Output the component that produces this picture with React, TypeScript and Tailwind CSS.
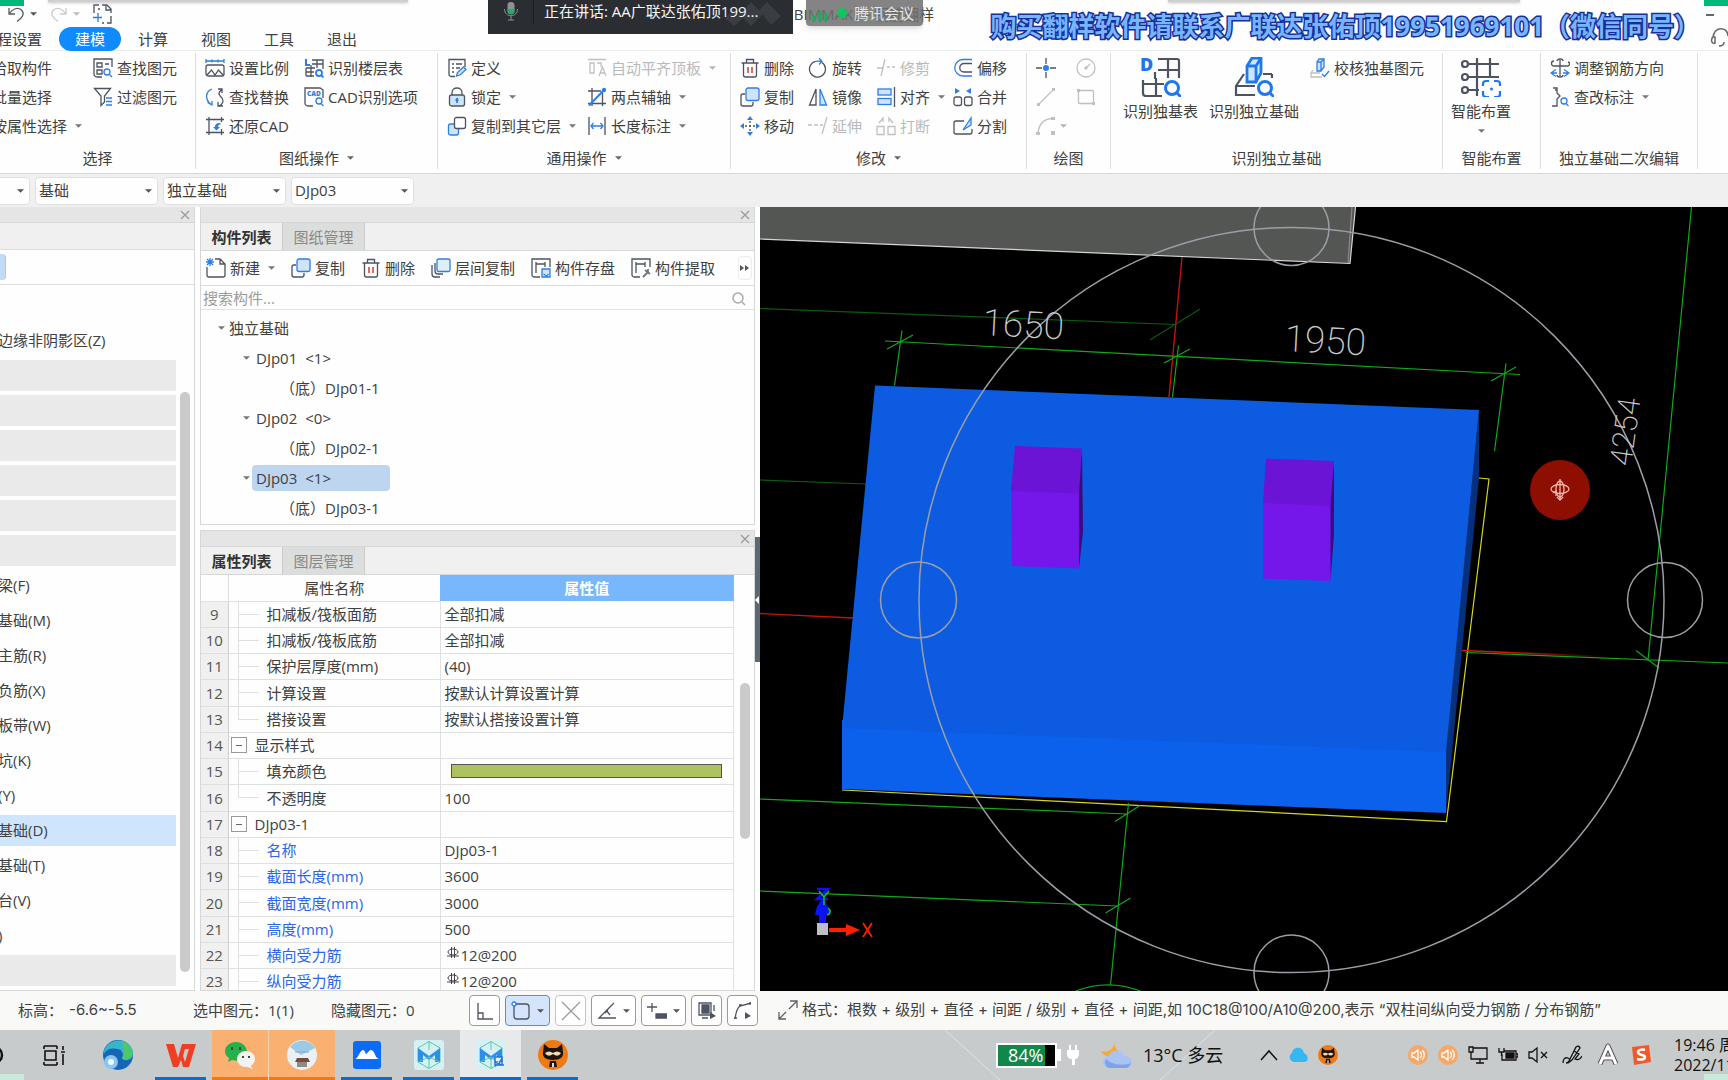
import type { ReactNode } from "react";
import clsx from "clsx";

const K = "#4d5361";
const B = "#2d7fe6";
const L = "#cfe4fb";
const G = "#bfc1c1";

const icons: Record<string, ReactNode> = {
  undo: <path d="M3 4v6h6M3.500 9.500C6 5 12 2.500 15.500 6s1 8-4.500 11.500" stroke="#5a5a5a" />,
  redo: <path d="M17 4v6h-6M16.500 9.500C14 5 8 2.500 4.500 6s-1 8 4.500 11.500" stroke="#c9cbca" />,
  newDoc: (
    <>
      <path d="M2 9V1h5M10 1h5l4 4v4M14 1v5h5M19 12v7h-4M12 19h-2M6 5h2" stroke={K} />
      <path d="M6 9v9M1 13.500h9" stroke={B} />
    </>
  ),
  find: (
    <>
      <path d="M9 19H4a3 3 0 0 1-3-3V1h18v8M4 5h5v4H4zM4 12h5v4H4zM12 6h4" stroke={K} />
      <circle cx="14" cy="14" r="3" stroke={B} />
      <path d="m16.500 16.500 2.500 2.500" stroke={B} />
    </>
  ),
  filter: (
    <>
      <path d="M1.500 1.500h16l-6 7.500v6L8 18.500V9z" stroke={K} />
      <path d="M13 11h6M13 14.500h6M13 18h6" stroke={B} />
    </>
  ),
  scale: (
    <>
      <path d="M1 3h18M1 1v4M19 1v4M7 1.500v3M13 1.500v3" stroke={B} />
      <rect x="1" y="7" width="18" height="11" rx="2" stroke={K} />
      <path d="m2 17 4.500-5 3.500 5 3.500-5 4.500 5" stroke={K} />
    </>
  ),
  floorTable: (
    <>
      <path d="M2 1v6h4" stroke={B} strokeWidth="2" />
      <path d="M8 2h11v9M8 6h11M13 2v8M2 10h9M2 14h8M2 18h8M2 10v8M7 7v12" stroke={K} />
      <circle cx="15" cy="15" r="3" stroke={B} strokeWidth="1.800" />
      <path d="m17.500 17.500 2 2" stroke={B} strokeWidth="1.800" />
    </>
  ),
  replace: (
    <>
      <path d="M7 2C2 4 1 8 2 12s3 5 5 6M2.500 15.500 7 18V14" stroke={B} />
      <path d="M13 2h4v4M17 2c-4 4-4 5 0 9 2 3 1 6-3 8M13 15v4h5" stroke={K} />
    </>
  ),
  cadOptions: (
    <>
      <path d="M9 19H4a3 3 0 0 1-3-3V1h15l3 2v8" stroke={K} />
      <text x="3" y="8.500" fontSize="6.500" fontWeight="800" fill={B} stroke="none">CAD</text>
      <circle cx="15" cy="14" r="3" stroke={B} />
      <path d="m17 16.500 2.500 2.500" stroke={B} />
    </>
  ),
  restore: (
    <>
      <path d="M4 1v18M1 16.500h18M1 3.500h18M16.500 1v5M16.500 13v6" stroke={K} />
      <path d="M15 7c-4 0-5 2-5 4H8l3.500 3.500L15 11h-2c0-2 1-2.500 3-2.500z" fill={B} stroke="none" />
    </>
  ),
  define: (
    <>
      <path d="M8 18.500H4a2 2 0 0 1-2-2v-15h16V9M5 6h2M9 6h6M5 10h2M9 10h4M5 14h2" stroke={K} />
      <path d="m9.500 18 1-3.500 6-5.500 2.500 2.500-6 5.500z" fill={L} stroke={B} />
    </>
  ),
  lock: (
    <>
      <path d="M5 8V5.500a5 4.500 0 0 1 10 0V8" stroke={K} />
      <rect x="2.500" y="8" width="15" height="11" rx="2" fill={L} stroke={K} />
      <path d="M10 11v5M8.500 13h3" stroke={B} strokeWidth="1.800" />
    </>
  ),
  copyFloor: (
    <>
      <rect x="1.500" y="8" width="10" height="11" rx="2" fill={L} stroke={B} />
      <rect x="7.500" y="1.500" width="11" height="11" rx="2" fill="#fff" stroke={K} />
    </>
  ),
  alignTop: (
    <>
      <path d="M1 1.500h18M3 5h4v10H3zM10 5h4v4M12 18l3.500-9L19 18M13.500 15h4" stroke={G} />
    </>
  ),
  axis: (
    <>
      <path d="M5 1v18M1 16.500h18M1 4h13M15.500 6v13" stroke={K} />
      <path d="M2 18.500 18 2" stroke={B} strokeWidth="2" />
      <circle cx="17" cy="3" r="1.500" fill={B} stroke={B} />
    </>
  ),
  length: (
    <>
      <path d="M2 1v18M18 1v18" stroke={K} />
      <path d="M4 10h12M6.500 7 4 10l2.500 3M13.500 7l2.500 3-2.500 3" stroke={B} />
    </>
  ),
  trash: (
    <>
      <path d="M1.500 5h17M3.500 5v12a2 2 0 0 0 2 2h9a2 2 0 0 0 2-2V5M6.500 4.500V1.500h7v3" stroke={K} />
      <path d="M8 9v6M12 9v6" stroke="#d8473c" strokeWidth="1.600" />
    </>
  ),
  copy: (
    <>
      <path d="M5 7H3a2 2 0 0 0-2 2v8a2 2 0 0 0 2 2h8a2 2 0 0 0 2-2v-2" stroke={K} />
      <rect x="6" y="1" width="13" height="12.500" rx="2" fill={L} stroke={B} />
    </>
  ),
  move: (
    <>
      <path d="M10 5v10M5 10h10" stroke={K} strokeDasharray="2 2" />
      <path d="M10 0 7 4h6zM10 20l-3-4h6zM0 10l4-3v6zM20 10l-4-3v6z" fill={B} stroke="none" />
    </>
  ),
  rotate: (
    <>
      <path d="M14 4.500a8 8 0 1 1-7-1" stroke={K} />
      <path d="M6 4c2-1 5-1 7-.500M11 0l3 3.500-3 3" stroke={B} />
    </>
  ),
  mirror: (
    <>
      <path d="M8 2v16H1.500z" stroke={K} />
      <path d="M12 2v16h6.500z" fill={L} stroke={B} />
    </>
  ),
  extend: <path d="M0 9h4M6 9h4M12 9h3M19 1l-5 17" stroke={G} />,
  trim: <path d="M1 10h7M9 1 5 18M11 9h3M16 9h3" stroke={G} />,
  align: (
    <>
      <rect x="2" y="2" width="13" height="6" fill={L} stroke={B} />
      <rect x="2" y="11.500" width="13" height="6" fill={L} stroke={B} />
      <path d="M18.500 0v20" stroke={K} />
    </>
  ),
  breakUp: <path d="M1 10.500h7v8H1zM12 10.500h7v8h-7zM3 7l4-5v4M17 7l-4-5v4" stroke={G} />,
  offset: (
    <>
      <path d="M19 1.500h-9a8 8 0 0 0 0 16.500h9" stroke={B} />
      <path d="M19 5.500h-8a4 4 0 0 0 0 8.500h8" stroke={K} />
    </>
  ),
  merge: (
    <>
      <rect x="1" y="10" width="7.500" height="8.500" rx="2" stroke={K} />
      <rect x="11.500" y="10" width="7.500" height="8.500" rx="2" stroke={K} />
      <path d="M2 1v6l5-3zM18 1v6l-5-3z" fill={B} stroke="none" />
    </>
  ),
  split: (
    <>
      <path d="M11 5H3a2 2 0 0 0-2 2v9a2 2 0 0 0 2 2h14a2 2 0 0 0 2-2v-3" stroke={K} />
      <path d="M10 14 18 2v7z" fill={L} stroke={B} />
    </>
  ),
  point: (
    <>
      <path d="M10 0v6M10 14v6M0 10h6M14 10h6" stroke={K} />
      <circle cx="10" cy="10" r="3" fill={B} stroke="none" />
    </>
  ),
  circle: (
    <>
      <circle cx="10" cy="10" r="9" stroke={G} />
      <path d="m10 10 4-4" stroke={G} />
      <circle cx="10" cy="10" r="1" stroke={G} />
    </>
  ),
  line: (
    <>
      <path d="M3 17 17 3" stroke={G} />
      <path d="M1 16h3v3H1zM16 1h3v3h-3z" fill={G} stroke="none" />
    </>
  ),
  rect: (
    <>
      <rect x="2.500" y="3.500" width="15" height="13" rx="1" stroke={G} />
      <path d="M1 2h3v3H1zM16 15h3v3h-3z" fill={G} stroke="none" />
    </>
  ),
  arc: (
    <>
      <path d="M2 17C3 8 7 3 16 2.500" stroke={G} />
      <path d="M0 16h4v3H0zM15 1h4v3h-4zM15 15h4v4h-4z" fill={G} stroke="none" />
    </>
  ),
  check: (
    <>
      <path d="M3 12 1 15v4h11M1 15h9" stroke={G} />
      <path d="M7 4 9 1h5v8l-3 4H7zM7 4h4v9M11 4l3-3" fill={L} stroke={B} />
      <path d="m12 16 2.500 2.500L19 13" stroke={B} />
    </>
  ),
  rebarDir: (
    <>
      <path d="M10 2v16M5 8H4a2 2 0 0 1 0-5M5 8h12a2 2 0 0 0 1-4M7 3a3 2 0 0 1 6 0M7 17a3 2 0 0 0 6 0" stroke={K} />
      <path d="M6 11.500 1 15l5 3.500M14 11.500l5 3.500-5 3.500M1 15h6M13 15h6" stroke={B} />
    </>
  ),
  checkMark: (
    <>
      <path d="M3 1h4v5l3 3-3 3v7H2M7 3H5" stroke={K} />
      <circle cx="14" cy="14" r="3" stroke={B} />
      <path d="m16 16.500 2.500 2.500" stroke={B} />
    </>
  ),
  create: (
    <>
      <path d="M1 9v8a2 2 0 0 0 2 2h14a2 2 0 0 0 2-2V6l-5-5H9M14 1v5h5" stroke={K} />
      <path d="M4 0v8M0 4h8M1 1l6 6M7 1 1 7" stroke={B} />
    </>
  ),
  layerCopy: (
    <>
      <path d="M1 7v9a3 3 0 0 0 3 3h5M4 5v8a3 3 0 0 0 3 3h5" stroke={K} />
      <rect x="6" y="1" width="13" height="12.500" rx="1.500" fill="#dfeefd" stroke={B} />
    </>
  ),
  store: (
    <>
      <path d="M9 19H3a2 2 0 0 1-2-2V1h18v8M5 4v11M5 6h9M14 4v5" stroke={K} />
      <path d="M11 11h8v8h-8zM12.500 16l3 2 2-2" fill={L} stroke={B} />
    </>
  ),
  extract: (
    <>
      <path d="M9 19H3a2 2 0 0 1-2-2V1h18v8M5 4v11M5 6h9M14 4v5" stroke={K} />
      <path d="m12 19 5-5M14 12l5 4M17 11v4" stroke="#6e7480" strokeWidth="1.800" />
    </>
  ),
  expand: <path d="M12 1h7v7M19 1l-8 8M1 12v7h7M1 19l7-7" stroke="#5c6066" />,
};

function Icon({ name, className = "size-5" }: { name: string; className?: string }) {
  return (
    <svg className={clsx("shrink-0", className)} viewBox="0 0 20 20" fill="none" strokeWidth="1.300" aria-hidden="true">
      {icons[name]}
    </svg>
  );
}

function Caret({ className = "text-[#777]" }: { className?: string }) {
  return (
    <svg className={clsx("h-1 w-[7px] shrink-0", className)} viewBox="0 0 8 4" fill="currentColor" aria-hidden="true">
      <path d="M0 0h8L4 4z" />
    </svg>
  );
}

type ToolProps = { icon?: string; label?: string; caret?: boolean; disabled?: boolean; name?: string };

function Tool({ icon, label, caret, disabled, name }: ToolProps) {
  return (
    <button
      disabled={disabled}
      aria-label={name}
      className={clsx("flex h-[29px] items-center gap-1 whitespace-nowrap", disabled ? "text-[#b9bbbb]" : "text-[#404040]")}
    >
      {icon && <Icon name={icon} />}
      {label && <span>{label}</span>}
      {caret && <span className={label ? "pl-1" : ""}><Caret className={disabled ? "text-[#b5b5b5]" : "text-[#777]"} /></span>}
    </button>
  );
}

function Group({ label, caret, width, children }: { label: string; caret?: boolean; width: string; children: ReactNode }) {
  return (
    <section className={clsx("flex shrink-0 flex-col border-r border-[#dcdedd]", width)}>
      <div className="flex h-[87px]">{children}</div>
      <div className="flex h-[29px] items-center justify-center gap-2 pt-1.5">
        <span>{label}</span>
        {caret && <Caret className="text-[#666]" />}
      </div>
    </section>
  );
}

function BigTool({ label, caret, children }: { label: string; caret?: boolean; children: ReactNode }) {
  return (
    <button className="flex flex-col items-center whitespace-nowrap pt-1">
      <svg className="size-10" viewBox="0 0 40 40" fill="none" strokeWidth="2.200" stroke={K} aria-hidden="true">
        {children}
      </svg>
      <span className="mt-1">{label}</span>
      {caret && <Caret className="mt-2 text-[#777]" />}
    </button>
  );
}

function TitleBar() {
  return (
    <header className="relative h-[27px]">
      <div className="flex h-[27px] items-center gap-2 pl-1.5">
        <button aria-label="撤销"><Icon name="undo" /></button>
        <Caret className="-ml-1 text-[#555]" />
        <button aria-label="重做" className="ml-1"><Icon name="redo" /></button>
        <Caret className="-ml-1 text-[#bbb]" />
        <button aria-label="新建" className="ml-1"><Icon name="newDoc" /></button>
      </div>
      <h1 className="absolute inset-x-0 top-1 text-center text-[15px] text-[#444]">BIMMAKE - 钢筋翻样</h1>

      {/* screen-share overlays */}
      <div className="absolute left-0 top-0 h-1.5 w-6 bg-[#00b978]" />
      <div className="absolute right-0 top-0 h-1.5 w-6 bg-[#00b978]" />
      <div className="absolute left-12 top-0 h-0.5 w-90 bg-[#cfcfcf] shadow-[0_1px_3px_#bbb]" />
      <div className="absolute left-[1168px] top-0 h-0.5 w-88 bg-[#cfcfcf] shadow-[0_1px_3px_#bbb]" />
      <div className="absolute left-[488px] top-0 flex h-[34px] w-[305px] items-center bg-[#2a2d31] pb-3 text-[#f5f5f5]">
        <svg className="absolute bottom-2 right-3 h-6 w-14" viewBox="0 0 56 24" fill="#3a3d41" aria-hidden="true">
          <path d="m0 16 9-9 9 9-9 8zM14 12 26 0l12 12-12 12zM34 8l8-8 14 14-10 9z" />
        </svg>
        <svg className="ml-[15px] h-5 w-4" viewBox="0 0 16 20" fill="none" aria-hidden="true">
          <rect x="4.500" y="1" width="7" height="12" rx="3.500" fill="#8d9394" />
          <path d="M4.500 8h7v2a3.500 3.500 0 0 1-7 0z" fill="#2aa86e" />
          <path d="M1.500 8c0 9 13 9 13 0M8 15v4M5 19h6" stroke="#8d9394" />
        </svg>
        <span className="ml-3.5 h-6 w-px bg-[#1b1d20]" />
        <span className="relative ml-2.5 whitespace-nowrap">正在讲话: AA广联达张佑顶199...</span>
      </div>
      <div className="absolute left-[806px] top-0 flex h-[26px] w-[117px] items-center rounded-b bg-[#6d6f6d]/85 shadow-md">
        <svg className="ml-1.5 h-5 w-10" viewBox="0 0 40 20" aria-hidden="true">
          <path d="M2 19v-6M8 19V8M14 19v-9" stroke="#12b25c" strokeWidth="3" />
          <circle cx="30" cy="10" r="5" fill="#12c35e" />
        </svg>
        <span className="whitespace-nowrap pl-0.5 text-[#e6e6e6]">腾讯会议</span>
      </div>
      <p className="absolute right-7 top-1.5 whitespace-nowrap text-[26px] font-bold leading-10 text-[#78b4ff] [-webkit-text-stroke:3px_#16309a] [paint-order:stroke_fill]">
        购买翻样软件请联系广联达张佑顶19951969101（微信同号）
      </p>
      <svg className="absolute right-0 top-3 h-9 w-6" viewBox="0 0 24 36" fill="none" stroke="#666" aria-hidden="true">
        <path d="M2 3h8" strokeWidth="2" />
        <path d="M9 26c0-12 15-12 15-2M11 25c-4-2-5 8 0 6zM20 30c0 3-2 4-5 4" strokeWidth="1.500" />
      </svg>
    </header>
  );
}

const tabs = ["建模", "计算", "视图", "工具", "退出"];

function Tabs() {
  return (
    <nav className="flex h-6 items-center gap-px border-b border-[#ebecec]">
      <button className="-ml-[18px] mr-4 whitespace-nowrap">工程设置</button>
      {tabs.map((tab, i) => (
        <button key={tab} className={clsx("h-6 w-[62px] rounded-full", i === 0 && "bg-[#0f8aff] text-white")}>
          {tab}
        </button>
      ))}
    </nav>
  );
}

function Ribbon() {
  return (
    <div className="flex shrink-0 overflow-hidden border-b border-[#d5d7d6] pb-1 pt-0.5">
      <Group label="选择" width="w-[196px]">
        <div className="-ml-2 w-[101px]">
          <Tool label="拾取构件" />
          <Tool label="批量选择" />
          <Tool label="按属性选择" caret />
        </div>
        <div>
          <Tool icon="find" label="查找图元" />
          <Tool icon="filter" label="过滤图元" />
        </div>
      </Group>
      <Group label="图纸操作" caret width="w-[242px] *:first:pl-[9px]">
        <div className="w-[99px]">
          <Tool icon="scale" label="设置比例" />
          <Tool icon="replace" label="查找替换" />
          <Tool icon="restore" label="还原CAD" />
        </div>
        <div>
          <Tool icon="floorTable" label="识别楼层表" />
          <Tool icon="cadOptions" label="CAD识别选项" />
        </div>
      </Group>
      <Group label="通用操作" caret width="w-[293px] *:first:pl-[9px]">
        <div className="w-[140px]">
          <Tool icon="define" label="定义" />
          <Tool icon="lock" label="锁定" caret />
          <Tool icon="copyFloor" label="复制到其它层" caret />
        </div>
        <div>
          <Tool icon="alignTop" label="自动平齐顶板" caret disabled />
          <Tool icon="axis" label="两点辅轴" caret />
          <Tool icon="length" label="长度标注" caret />
        </div>
      </Group>
      <Group label="修改" caret width="w-[296px] *:first:pl-[9px]">
        <div className="w-17">
          <Tool icon="trash" label="删除" />
          <Tool icon="copy" label="复制" />
          <Tool icon="move" label="移动" />
        </div>
        <div className="w-17">
          <Tool icon="rotate" label="旋转" />
          <Tool icon="mirror" label="镜像" />
          <Tool icon="extend" label="延伸" disabled />
        </div>
        <div className="w-[77px]">
          <Tool icon="trim" label="修剪" disabled />
          <Tool icon="align" label="对齐" caret />
          <Tool icon="breakUp" label="打断" disabled />
        </div>
        <div>
          <Tool icon="offset" label="偏移" />
          <Tool icon="merge" label="合并" />
          <Tool icon="split" label="分割" />
        </div>
      </Group>
      <Group label="绘图" width="w-[84px] *:first:pl-[9px]">
        <div className="w-10">
          <Tool icon="point" name="点" />
          <Tool icon="line" name="直线" disabled />
          <Tool icon="arc" name="弧" caret disabled />
        </div>
        <div>
          <Tool icon="circle" name="圆" disabled />
          <Tool icon="rect" name="矩形" disabled />
        </div>
      </Group>
      <Group label="识别独立基础" width="w-[332px] *:first:gap-[11px] *:first:pl-3">
        <BigTool label="识别独基表">
          <text x="-1" y="14" fontSize="18" fontWeight="800" fill="#1f78ea" stroke="none">D</text>
          <path d="M17 2h19q2 0 2 2v17M38 13H17M27 2v19M15 21v18M2 23v13q0 3 3 3h16M2 27h21M14 15v7" />
          <circle cx="31" cy="31" r="6.500" stroke="#1f78ea" strokeWidth="3" />
          <path d="m35 35 5 5" stroke="#1f78ea" strokeWidth="3" />
        </BigTool>
        <BigTool label="识别独立基础">
          <path d="M10 17 2 29v9h19M2 29h19M29 17h9M38 17v4" />
          <path d="M13 9 18 1h9v15l-5 9H13zM13 9h9v16M22 9l5-8" fill="#cfe4fb" stroke="#1f78ea" strokeWidth="2.800" />
          <circle cx="31" cy="31" r="6.500" fill="#fff" stroke="#1f78ea" strokeWidth="3" />
          <path d="m35 35 5 5" stroke="#1f78ea" strokeWidth="3" />
        </BigTool>
        <div>
          <Tool icon="check" label="校核独基图元" />
        </div>
      </Group>
      <Group label="智能布置" width="w-[98px] *:first:pl-2">
        <BigTool label="智能布置" caret>
          <path d="M7 7h31M7 20h31M7 33h11M16 1v38M29 1v19" />
          <g fill="#fff">
            <circle cx="4" cy="7" r="3" />
            <circle cx="4" cy="20" r="3" />
            <circle cx="4" cy="33" r="3" />
          </g>
          <path d="M22 29v-2q0-3 3-3h3M33 24h3q3 0 3 3v2M39 34v3q0 3-3 3h-3M28 40h-3q-3 0-3-3v-3" stroke="#1f78ea" />
          <circle cx="30.500" cy="32" r="1.500" fill="#1f78ea" stroke="none" />
        </BigTool>
      </Group>
      <Group label="独立基础二次编辑" width="w-[157px] *:first:pl-[9px]">
        <div>
          <Tool icon="rebarDir" label="调整钢筋方向" />
          <Tool icon="checkMark" label="查改标注" caret />
        </div>
      </Group>
    </div>
  );
}

function Picker({ label, value, className }: { label: string; value: string; className: string }) {
  return (
    <div className={clsx("relative h-7 shrink-0", className)}>
      <select aria-label={label} className="h-7 w-full appearance-none rounded border border-[#dfe1e0] bg-[#fdfefd] pb-0.5 pl-[3px]">
        <option>{value}</option>
      </select>
      <span className="pointer-events-none absolute right-1.5 top-0 flex h-7 items-center"><Caret className="text-[#555]" /></span>
    </div>
  );
}

function PanelHead({ title }: { title: string }) {
  return (
    <div className="flex h-4 shrink-0 items-center justify-end border-b border-[#d6d8d7] bg-[#e4e5e4] pr-[3px]">
      <button aria-label={title}>
        <svg className="size-3" viewBox="0 0 12 12" stroke="#999" strokeWidth="1.200" aria-hidden="true">
          <path d="m2 2 8 8M10 2l-8 8" />
        </svg>
      </button>
    </div>
  );
}

const navRows = ["", "边缘非阴影区(Z)", "#", "#", "#", "#", "#", "#", "梁(F)", "基础(M)", "主筋(R)", "负筋(X)", "板带(W)", "坑(K)", "(Y)", "基础(D)", "基础(T)", "台(V)", ")", "#"];

function NavPanel() {
  return (
    <aside className="flex w-[195px] shrink-0 flex-col overflow-hidden border-b border-r border-[#d6d8d7]">
      <PanelHead title="关闭导航" />
      <div className="h-[27px] shrink-0 border-b border-[#dcdedd] bg-[#eff0ef]" />
      <div className="flex h-[35px] shrink-0 items-center border-b border-[#dcdedd]">
        <div className="h-[26px] w-1.5 rounded-r border-r border-[#a9c8ec] bg-[#c3dbf6]" />
      </div>
      <div className="relative min-h-0 flex-1">
        <ul className="flex w-44 flex-col gap-1 pt-[5px]">
          {navRows.map((row, i) => (
            <li
              key={i}
              className={clsx("flex h-[31px] shrink-0 items-center whitespace-nowrap pb-0.5", row === "#" && "bg-[#e9eae9]", row === "基础(D)" && "bg-[#cfe5fd]")}
            >
              <span className="-ml-0.5">{row !== "#" && row}</span>
            </li>
          ))}
        </ul>
        <div className="absolute bottom-[18px] right-1 top-[107px] w-2.5 rounded-full bg-[#c9cac9]" />
      </div>
    </aside>
  );
}

function TabPair({ active, other }: { active: string; other: string }) {
  return (
    <div role="tablist" className="flex h-7 shrink-0 border-b border-[#d6d8d7] bg-[#eff0ef]">
      <button role="tab" aria-selected="true" className="w-[82px] border-r border-[#c9cbca] font-bold text-[#333]">{active}</button>
      <button role="tab" aria-selected="false" className="w-[82px] border-r border-[#c9cbca] bg-[#dcdedd] text-[#888]">{other}</button>
    </div>
  );
}

const tree = [
  { depth: 0, text: "独立基础" },
  { depth: 1, text: "DJp01", count: "<1>" },
  { depth: 2, text: "（底）", child: "DJp01-1" },
  { depth: 1, text: "DJp02", count: "<0>" },
  { depth: 2, text: "（底）", child: "DJp02-1" },
  { depth: 1, text: "DJp03", count: "<1>", selected: true },
  { depth: 2, text: "（底）", child: "DJp03-1" },
];

function ComponentPanel() {
  return (
    <section className="flex h-[318px] shrink-0 flex-col border border-t-0 border-[#d6d8d7]">
      <PanelHead title="关闭构件列表" />
      <TabPair active="构件列表" other="图纸管理" />
      <div className="flex h-[35px] shrink-0 items-center gap-4 border-b border-[#dcdedd] pl-[5px]">
        <Tool icon="create" label="新建" caret />
        <Tool icon="copy" label="复制" />
        <Tool icon="trash" label="删除" />
        <Tool icon="layerCopy" label="层间复制" />
        <Tool icon="store" label="构件存盘" />
        <Tool icon="extract" label="构件提取" />
        <button aria-label="更多" className="ml-auto mr-0.5 flex h-6 w-3.5 items-center justify-center rounded border border-[#eceeed]">
          <svg className="h-2 w-2.5" viewBox="0 0 10 8" fill="#555" aria-hidden="true"><path d="m0 1 4 3-4 3zM5 1l4 3-4 3z" /></svg>
        </button>
      </div>
      <div className="relative h-6 shrink-0 border-b border-[#e2e4e3]">
        <input aria-label="搜索构件" placeholder="搜索构件..." className="h-full w-full bg-transparent pl-0.5 outline-none placeholder:text-[#9a9c9b]" />
        <svg className="absolute right-2 top-1.5 size-3.5" viewBox="0 0 14 14" fill="none" stroke="#aaa" strokeWidth="1.500" aria-hidden="true">
          <circle cx="6" cy="6" r="5" />
          <path d="m10 10 3 3" />
        </svg>
      </div>
      <ul className="pt-[3px]">
        {tree.map((node, i) => (
          <li key={i} className={clsx("flex h-[30px] items-center gap-1", node.depth === 0 && "pl-[17px]", node.depth === 1 && "pl-[42px]", node.depth === 2 && "pl-[79px]")}>
            {node.depth < 2 && <Caret className="text-[#777]" />}
            <span className={clsx("flex h-[26px] rounded leading-[26px]", node.depth === 1 && "-ml-0.5 w-[138px] gap-2 pl-1", node.selected && "bg-[#bdd5ef]")}>
              <span>{node.text}</span>
              {node.count && <span>{node.count}</span>}
              {node.child && <span>{node.child}</span>}
            </span>
          </li>
        ))}
      </ul>
    </section>
  );
}

type Prop = { no: number; name: string; value?: string; kind?: "group" | "last" | "color" | "rebar"; blue?: boolean };

const props: Prop[] = [
  { no: 9, name: "扣减板/筏板面筋", value: "全部扣减" },
  { no: 10, name: "扣减板/筏板底筋", value: "全部扣减" },
  { no: 11, name: "保护层厚度(mm)", value: "(40)" },
  { no: 12, name: "计算设置", value: "按默认计算设置计算" },
  { no: 13, name: "搭接设置", value: "按默认搭接设置计算", kind: "last" },
  { no: 14, name: "显示样式", kind: "group" },
  { no: 15, name: "填充颜色", kind: "color" },
  { no: 16, name: "不透明度", value: "100", kind: "last" },
  { no: 17, name: "DJp03-1", kind: "group" },
  { no: 18, name: "名称", value: "DJp03-1", blue: true },
  { no: 19, name: "截面长度(mm)", value: "3600", blue: true },
  { no: 20, name: "截面宽度(mm)", value: "3000", blue: true },
  { no: 21, name: "高度(mm)", value: "500", blue: true },
  { no: 22, name: "横向受力筋", value: "12@200", kind: "rebar", blue: true },
  { no: 23, name: "纵向受力筋", value: "12@200", kind: "rebar", blue: true },
];

function PropRow({ row }: { row: Prop }) {
  return (
    <tr className="h-[26px] border-b border-[#dfe1e0] nth-[4n]:h-[27px]">
      <td className="border-r border-[#cfd1d0] bg-[#eff0ef] p-0 text-center text-[#555]">{row.no}</td>
      <td className="border-r border-[#dfe1e0] p-0">
        {row.kind === "group" ? (
          <div className="flex items-center gap-2 pl-[2px]">
            <button aria-label="折叠" className="flex size-4 items-center justify-center border border-[#999]">
              <span className="h-px w-1.5 bg-[#666]" />
            </button>
            <span>{row.name}</span>
          </div>
        ) : (
          <div className="flex h-[25px] items-center pl-[9px]">
            <div className={clsx("w-px self-start bg-[#dfe1e0]", row.kind === "last" ? "h-[13px]" : "h-full")} />
            <div className="h-px w-5 bg-[#dfe1e0]" />
            <span className={clsx("pl-2 leading-5", row.blue && "text-[#2a66e6]")}>{row.name}</span>
          </div>
        )}
      </td>
      <td className="border-r border-[#dfe1e0] py-0 pl-1">
        {row.kind === "color" ? (
          <div className="ml-1.5 mr-[11px] h-3.5 border border-[#555] bg-[#adc362]" />
        ) : (
          <div className="flex items-center leading-5">
            {row.kind === "rebar" && (
              <svg className="mb-1 ml-0.5 mr-0.5 size-3" viewBox="0 0 12 12" fill="none" stroke="#444" aria-hidden="true">
                <path d="M4.500 0v11M7.500 0v11M0 9h12" />
                <ellipse cx="6" cy="5" rx="5" ry="3" />
              </svg>
            )}
            {row.value}
          </div>
        )}
      </td>
    </tr>
  );
}

function PropertyPanel() {
  return (
    <section className="mt-[5px] flex min-h-0 flex-1 flex-col overflow-hidden border border-[#d6d8d7]">
      <PanelHead title="关闭属性列表" />
      <TabPair active="属性列表" other="图层管理" />
      <div className="relative min-h-0 flex-1 overflow-hidden pr-5">
        <table className="w-full table-fixed border-collapse">
          <thead>
            <tr className="h-[26px]">
              <th className="w-[27px] border-b border-r border-[#dfe1e0]" aria-label="序号" />
              <th className="w-[212px] border-b border-[#dfe1e0] p-0 font-normal">属性名称</th>
              <th className="bg-[#78b7fb] p-0 font-bold text-white">属性值</th>
            </tr>
          </thead>
          <tbody>
            {props.map((row) => <PropRow key={row.no} row={row} />)}
          </tbody>
        </table>
        <div className="absolute right-1 top-[108px] h-[156px] w-2.5 rounded-full bg-[#c9cac9]" />
      </div>
    </section>
  );
}

function Viewport() {
  return (
    <main className="relative min-w-0 flex-1 bg-black">
      <svg className="absolute inset-0 h-full w-full" viewBox="760 207 968 784" preserveAspectRatio="xMinYMin slice" fill="none" strokeWidth="1.200">
        <defs>
          <linearGradient id="axisFade" gradientUnits="userSpaceOnUse" x1="1462" y1="650" x2="1610" y2="656">
            <stop offset="0.3" stopColor="#d01a08" />
            <stop offset="1" stopColor="#d01a08" stopOpacity="0" />
          </linearGradient>
        </defs>
        <path d="M760 207h595.500L1350 263.500 760 239z" fill="#545653" />
        <path d="M760 239l590 24.500 5.500-56.500" stroke="#d5d5d5" />
        <path d="M1348 263l4-56" stroke="#8a8a8a" />

        {/* grid axes */}
        <path d="M1182 257l-13 140M760 613.500l93 4.500" stroke="#c31409" strokeWidth="1.400" />
        <path d="M760 308.500l415 16M1150 340l50-31M760 480l106 4" stroke="#0c5a10" />

        {/* footing */}
        <path d="M842 720 1446 744v69L842 789z" fill="#0b60ec" />
        <path d="M1479 410v68l-33 335V745z" fill="#06307c" />
        <path d="M875 385.500 1479 410 1446 752 842 728z" fill="#0c5be0" />
        <path d="M1479 478l10 1-42.500 342.500L842 790" stroke="#d8d321" />

        {/* columns */}
        <path d="M1082 448.500l1 83-4 37-2-75z" fill="#3b0a80" />
        <path d="M1011 486l68 2.500v80l-67-2.500z" fill="#7517ea" />
        <path d="M1015 446l67 2.500-3 45-68-2.500z" fill="#6b14d6" />
        <path d="M1334 461v73l-3.500 47-2-75z" fill="#3b0a80" />
        <path d="M1263 498l67.500 3v80l-67.500-2.500z" fill="#7517ea" />
        <path d="M1266 458.500l68 2.500-3.500 45-67.500-3z" fill="#6b14d6" />

        {/* dimension lines */}
        <path
          d="M885 341 1520 374.500M902 330.500 894.500 385.500M887 349l26-14M1178.500 345.500 1172.500 397M1164 363l26-14M1506 363.500 1494.500 451M1491 381l25-14M1691.500 207 1648 661M1465.500 652.500 1728 663M1636 650.500l23 17.500M760 799l367 15M1115 821.500l25-16M1128.500 803l-18 182M760 891l358 15M1105.500 913l25-15M1076 991a90 90 0 0 1 64 0"
          stroke="#12a81b"
        />
        <path d="M1462 650.500l140 6" stroke="url(#axisFade)" strokeWidth="1.600" />

        {/* orbit control */}
        <g stroke="#9b9ea6" strokeWidth="1.500">
          <circle cx="1291.500" cy="600" r="372.500" />
          <circle cx="918.500" cy="600" r="38" />
          <circle cx="1665" cy="600" r="37.500" />
          <circle cx="1291.500" cy="228" r="37.500" />
          <circle cx="1291.500" cy="972.500" r="37.500" />
        </g>

        <g fill="#c9cac9" fontFamily="Roboto, sans-serif" fontWeight="200" fontSize="37">
          <text transform="translate(982 335) rotate(3)">1650</text>
          <text transform="translate(1284 351) rotate(3)">1950</text>
          <text transform="translate(1631 467) rotate(-82)" fontSize="31">4254</text>
        </g>

        {/* cursor */}
        <circle cx="1560" cy="490" r="30" fill="#8e0f02" />
        <g stroke="#f3b5a8" strokeWidth="1.300">
          <ellipse cx="1560" cy="489" rx="9" ry="4.500" />
          <ellipse cx="1560" cy="489" rx="4" ry="8" />
          <path d="M1553 493l3-2v5M1560 479v20M1557 497l3 3 3-3" />
        </g>

        {/* ucs */}
        <path d="M829 930h19" stroke="#ff1e00" strokeWidth="4" />
        <path d="M846 924l14 6-14 6z" fill="#ff1e00" />
        <path d="M863 923l9 14M872 923l-9 14" stroke="#ff1e00" strokeWidth="1.800" />
        <path d="M822.500 925v-14" stroke="#0b12f5" strokeWidth="7" />
        <path d="M815 915q1-10 7.500-16 6.500 6 7.500 16z" fill="#0b12f5" />
        <path d="M817 889h11l-11 10h11" stroke="#0b12f5" strokeWidth="2.500" />
        <path d="M819 891l5 6 5-6M824 897v8M828 908c3 2 3 6-1 7" stroke="#16c41d" strokeWidth="1.500" />
        <path d="M817 923h11v12h-11z" fill="#bfbfc3" />
      </svg>
    </main>
  );
}

const statusTools: { name: string; caret?: boolean; active?: boolean; faint?: boolean; art: ReactNode }[] = [
  { name: "正交", art: <path d="M3 2v16h15M3 12h5v6" /> },
  {
    name: "捕捉",
    caret: true,
    active: true,
    art: (
      <>
        <rect x="3" y="3" width="15" height="15" rx="3" />
        <circle cx="3" cy="3" r="2" fill="#fff" stroke={B} />
      </>
    ),
  },
  { name: "交点", faint: true, art: <path d="m1 1 18 18M19 1 1 19" stroke="#999" /> },
  { name: "角度", caret: true, art: <path d="M17 2 2 17h17M9 9l4 5M8 12l3-3" /> },
  {
    name: "偏移",
    caret: true,
    art: (
      <>
        <path d="M5 2v9M0 6h10" />
        <path d="M9 13h11v4H9z" fill={K} />
      </>
    ),
  },
  {
    name: "选择",
    art: (
      <>
        <path d="M2 2h12v12H2zM5 17h6M17 4v6" />
        <path d="M5 4h7v8H5z" fill={K} />
        <path d="M13 11v7l6-3z" fill={K} stroke="none" />
      </>
    ),
  },
  {
    name: "折线",
    art: (
      <>
        <path d="M2 18C3 10 4 7 7 5l11-3M1 17h3M6 4h3M17 1v3" />
        <path d="M12 11v7l6-3z" fill={K} stroke="none" />
      </>
    ),
  },
];

function StatusBar() {
  return (
    <footer className="flex h-[39px] shrink-0 items-center overflow-hidden whitespace-nowrap bg-[#f9faf8] text-[#404040]">
      <div className="flex w-[469px] shrink-0 items-center pb-0.5">
        <span className="ml-[18px] w-[51px]">标高：</span>
        <span className="w-[124px] font-[Inter]">-6.6~-5.5</span>
        <span className="w-[138px]">选中图元：1(1)</span>
        <span>隐藏图元：0</span>
      </div>
      <div className="flex shrink-0 items-center gap-[5px]">
        {statusTools.map((t) => (
          <button
            key={t.name}
            aria-label={t.name}
            className={clsx(
              "flex h-[31px] items-center justify-center gap-1.5 rounded border",
              t.caret ? "w-[45px]" : "w-[31px]",
              t.active ? "border-[#5a8fd6] bg-[#d3e4fb]" : "border-[#9a9c9b] bg-white",
              t.faint && "border-[#c4c6c5]",
            )}
          >
            <svg className="size-5" viewBox="0 0 20 20" fill="none" stroke={K} strokeWidth="1.300" aria-hidden="true">{t.art}</svg>
            {t.caret && <Caret className="text-[#555]" />}
          </button>
        ))}
      </div>
      <div className="ml-5 flex items-center gap-1 pb-0.5">
        <Icon name="expand" />
        <span className="font-[Inter,'Noto_Sans_CJK_SC']">格式：根数 + 级别 + 直径 + 间距 / 级别 + 直径 + 间距,如 10C18@100/A10@200,表示 “双柱间纵向受力钢筋 / 分布钢筋”</span>
      </div>
    </footer>
  );
}

function Fox() {
  return (
    <>
      <circle cx="15" cy="15" r="15" fill="#f07a12" />
      <path d="M6 4l5 4h8l5-4 1 8c1 5-3 8-10 8S4 17 5 12zM12 21h6l1 6h-8z" fill="#1d1410" />
      <path d="M7 13q4-3 8 0 4-3 8 0-3 5-8 1-5 4-8-1z" fill="#f6d9b0" />
      <path d="M14 23h2v4h-2z" fill="#ddd" />
    </>
  );
}

function Cube({ badge }: { badge?: boolean }) {
  return (
    <>
      <rect width="30" height="30" rx="3" fill="#d5f1f6" />
      <path d="M15 1.500 26 8v14l-11 6.500L4 22V8z" fill="none" stroke="#5cc7a3" />
      <path d="M4 22V8l11 8 11-8v14h-5v-7l-6 5-6-5v7z" fill="#2b8fe8" />
      <path d="M15 1.500V10M4 22l11-5 11 5M15 17v11" stroke="#5cc7a3" fill="none" />
      {badge && <path d="M19 17h7v8h-7zM18 19c3 6 6 6 10 6M19 26c3-1 6-5 7-8" fill="#e8f6fb" stroke="#2b6fd8" strokeWidth="1.500" />}
    </>
  );
}

const apps: { name: string; cell: string; bar?: string; art: ReactNode }[] = [
  {
    name: "任务视图",
    cell: "w-[57px]",
    art: <path d="M6 6h13M6 25h13M7 11h11v9H7zM25 6v4M25 14v11M6 6v3M19 6v3M6 22v3M19 22v3M23 12h4" fill="none" stroke="#111" strokeWidth="1.600" />,
  },
  {
    name: "Edge",
    cell: "w-[62px]",
    art: (
      <>
        <circle cx="15" cy="15" r="15" fill="#1566b8" />
        <path d="M1 11C4 2 13-1 20 1c8 3 12 10 9 16-2 4-9 4-10 1 2-3 1-8-4-9S4 8 1 14z" fill="#36b7c9" />
        <path d="M18 1c9 2 13 9 11 15-2 4-9 5-10 2 3-5 2-12-1-17z" fill="#4fc66a" />
        <circle cx="8" cy="22" r="7" fill="#8cc5ee" />
        <circle cx="8" cy="22" r="3" fill="#f2f8fd" />
      </>
    ),
  },
  {
    name: "WPS",
    cell: "w-[51px]",
    bar: "bg-[#0d6cc9]",
    art: <path d="M0 4h8l4 14 4-14h14l-7 23h-6l-2-7-3 7H7zM19 9l-2 7 2 6 4-13z" fill="#f03e22" fillRule="evenodd" />,
  },
  {
    name: "微信",
    cell: "w-14 bg-[#f9b071]",
    bar: "bg-[#f4790d]",
    art: (
      <>
        <path d="M11 2C5 2 0 6 0 11c0 3 1 5 4 7l-1 4 4-2c12 3 16-4 15-9-1-6-6-9-11-9z" fill="#25b14b" />
        <ellipse cx="21" cy="19" rx="9" ry="8" fill="#f3f3f1" />
        <path d="m24 24 4 5-8-3z" fill="#f3f3f1" />
        <path d="M7 7v3M15 7v3M18 16v2M24 16v2" stroke="#444" strokeWidth="2" />
      </>
    ),
  },
  {
    name: "相册",
    cell: "w-[67px] -ml-1.5 border-l border-[#fbd3ae] bg-[#f9b071]",
    bar: "bg-[#f4790d]",
    art: (
      <>
        <circle cx="15" cy="15" r="15" fill="#e9f1f5" />
        <path d="M3 7a15 15 0 0 1 25 1L14 15z" fill="#9cc9e8" />
        <path d="M8 22l2-4h11l2 4z" fill="#7a4b3c" />
        <path d="M10 22h10v5H10z" fill="#8f8a86" />
        <path d="M8 12h14" stroke="#8fa3af" />
      </>
    ),
  },
  {
    name: "腾讯会议",
    cell: "w-[51px]",
    bar: "bg-[#0d6cc9]",
    art: (
      <>
        <rect x="1" y="1" width="28" height="28" rx="3" fill="#0c6cf5" />
        <path d="M3 19c3 0 5-9 8-9 2 0 2 3 3 4 2-1 3-4 5-4 4 0 4 9 8 9z" fill="#fff" />
      </>
    ),
  },
  { name: "BIMMAKE", cell: "ml-[5px] w-[51px]", bar: "bg-[#0d6cc9]", art: <Cube /> },
  { name: "钢筋翻样", cell: "w-[61px] bg-[#e7e9ea]", bar: "bg-[#0d6cc9]", art: <Cube badge /> },
  { name: "录屏", cell: "w-[51px]", bar: "bg-[#0d6cc9]", art: <Fox /> },
];

function Speaker() {
  return (
    <svg className="size-5" viewBox="0 0 20 20" fill="none" aria-hidden="true">
      <circle cx="10" cy="10" r="10" fill="#f7a866" />
      <path d="M4 8h2l4-3v10l-4-3H4zM12 7c2 1 2 5 0 6M14 5c3 2 3 8 0 10" stroke="#fff" strokeWidth="1.300" />
    </svg>
  );
}

function Taskbar() {
  return (
    <div className="relative flex h-[50px] shrink-0 overflow-hidden bg-[#c8cbcc] text-[#111]">
      <svg className="absolute inset-0 h-full w-full" viewBox="0 0 1728 50" preserveAspectRatio="xMaxYMid slice" stroke="#d6e3ea" aria-hidden="true">
        <path d="M945 0l55 50M1215 0l-55 50" />
      </svg>
      <svg className="relative h-[50px] w-5 shrink-0" viewBox="0 0 20 50" fill="none" stroke="#111" strokeWidth="2.500" aria-hidden="true">
        <circle cx="-6" cy="25" r="8" />
      </svg>
      <div className="relative flex gap-1.5 pl-1">
        {apps.map((app) => (
          <button key={app.name} aria-label={app.name} className={clsx("relative flex shrink-0 items-center justify-center", app.cell)}>
            <svg className="size-[30px]" viewBox="0 0 30 30" aria-hidden="true">{app.art}</svg>
            {app.bar && <span className={clsx("absolute inset-x-0 bottom-0 h-[3px]", app.bar)} />}
          </button>
        ))}
      </div>

      <div className="relative ml-auto flex shrink-0 items-center gap-[10px]">
        <div className="flex items-center">
          <div className="flex h-[25px] w-[61px] items-center border-2 border-white bg-linear-to-r from-[#12874a] from-82% to-black to-82% pl-2.5 text-[18px] leading-5 text-white">84%</div>
          <div className="h-3 w-1 bg-white" />
        </div>
        <svg className="-ml-1 mr-3 h-5 w-3" viewBox="0 0 12 20" fill="#fff" aria-hidden="true">
          <path d="M2 0h2v5h4V0h2v5h2v4c0 3-2 5-4 5v6H5v-6c-3 0-5-2-5-5V5h2z" />
        </svg>
        <svg className="h-7 w-8" viewBox="0 0 32 28" aria-hidden="true">
          <path d="M14 0c-1 6 1 9 5 11-5 7-16 6-19-1 6 2 13-1 14-10z" fill="#f3a93c" />
          <path d="M8 27a6 6 0 0 1 0-12c2-7 13-7 15 0 9-1 11 11 2 12z" fill="#a9c4f3" />
          <path d="M8 27a6 6 0 0 1-3-9c6 6 17 7 25 4-1 3-3 5-5 5z" fill="#7fa3e8" />
        </svg>
        <span className="w-[97px] whitespace-nowrap text-[18px]">13°C 多云</span>
        <svg className="ml-2.5 h-3 w-[18px]" viewBox="0 0 18 12" fill="none" stroke="#111" strokeWidth="1.500" aria-hidden="true"><path d="m1 11 8-9 8 9" /></svg>
        <svg className="size-5" viewBox="0 0 20 20" fill="#35b8f1" aria-hidden="true"><path d="M5 17a5 5 0 0 1-1-9c1-7 11-7 12 0 5 2 5 9 0 9z" /></svg>
        <svg className="mr-15 size-5" viewBox="0 0 30 30" aria-hidden="true"><Fox /></svg>
        <Speaker />
        <Speaker />
        <svg className="size-5" viewBox="0 0 20 20" fill="none" stroke="#111" strokeWidth="1.300" aria-hidden="true"><path d="M5 3h14v11H5M1 2h4v5H1zM3 7v7h2M12 14v4M8 18h8" /></svg>
        <svg className="size-5" viewBox="0 0 20 20" fill="none" stroke="#111" strokeWidth="1.300" aria-hidden="true">
          <path d="M6 6h12v9H4V9M18 9h2v3h-2M1 3v4h5V3M3.500 7v4" />
          <path d="M8 8h8v5H8z" fill="#111" />
        </svg>
        <svg className="size-5" viewBox="0 0 20 20" fill="none" stroke="#111" strokeWidth="1.300" aria-hidden="true"><path d="M1 7h3l5-4v14l-5-4H1zM13 7l6 6M19 7l-6 6" /></svg>
        <svg className="ml-1 size-5" viewBox="0 0 20 20" fill="none" stroke="#111" strokeWidth="1.300" aria-hidden="true"><path d="M1 18c0-4 2-6 5-5s1 5-2 5M7 16 14 2q3-2 4 1l-8 12-4 3M12 6l5 3-4 5c2 1 5 1 7-3" /></svg>
        <svg className="ml-1 size-6" viewBox="0 0 24 24" fill="none" stroke="#555" strokeLinejoin="round" aria-hidden="true">
          <path d="m4 21 8-18 8 18M7 15h10" strokeWidth="5" />
          <path d="m4 21 8-18 8 18M7 15h10" stroke="#fff" strokeWidth="3" />
        </svg>
        <svg className="size-[22px]" viewBox="0 0 22 22" aria-hidden="true">
          <path d="M2 3 19 1l2 17-17 3z" fill="#f1592a" />
          <path d="M15 6c-3-1-7 0-7 2 0 4 7 2 7 5s-5 3-8 2" fill="none" stroke="#fff" strokeWidth="2.500" />
        </svg>
        <div className="ml-3 w-[54px] overflow-hidden whitespace-nowrap text-[16px] leading-5">
          <div>19:46 周五</div>
          <div>2022/11/4</div>
        </div>
      </div>
      <div className="absolute bottom-0 left-0 h-1.5 w-6 bg-[#c9e9dc]" />
      <div className="absolute bottom-0 right-0 h-1.5 w-6 bg-[#c9e9dc]" />
    </div>
  );
}

export default function App() {
  return (
    <div className="flex h-screen flex-col overflow-hidden bg-[#fdfefd] font-['Open_Sans','Noto_Sans_CJK_SC',sans-serif] text-[15px] leading-5 text-[#404040]">
      <TitleBar />
      <Tabs />
      <Ribbon />
      <div className="flex h-[33px] shrink-0 items-center gap-[5px] bg-[#eff0ef]">
        <Picker label="楼层" value="" className="-ml-2 w-[38px]" />
        <Picker label="类别" value="基础" className="w-[123px]" />
        <Picker label="构件类型" value="独立基础" className="w-[123px]" />
        <Picker label="构件" value="DJp03" className="w-[123px]" />
      </div>
      <div className="flex min-h-0 flex-1">
        <NavPanel />
        <div className="ml-[5px] flex w-[555px] shrink-0 flex-col">
          <ComponentPanel />
          <PropertyPanel />
        </div>
        <div className="relative w-[5px] shrink-0">
          <button aria-label="收起面板" className="absolute left-0 top-[330px] flex h-[125px] w-[5px] items-center bg-[#5c6872]">
            <svg className="h-2 w-1" viewBox="0 0 4 8" fill="#fff" aria-hidden="true"><path d="M4 0v8L0 4z" /></svg>
          </button>
        </div>
        <Viewport />
      </div>
      <StatusBar />
      <Taskbar />
    </div>
  );
}
